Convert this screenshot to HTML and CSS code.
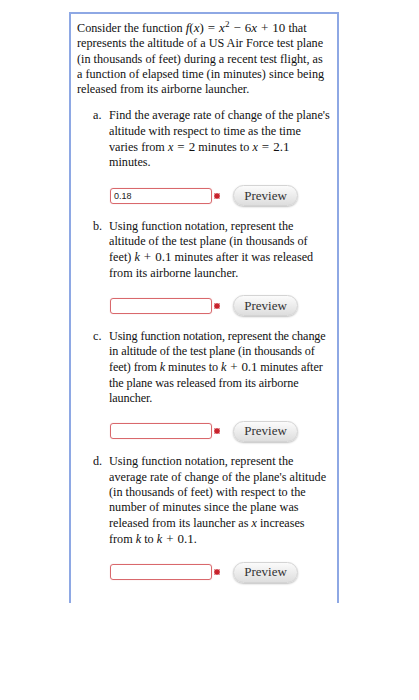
FILE: index.html
```html
<!DOCTYPE html>
<html>
<head>
<meta charset="utf-8">
<link rel="stylesheet" href="styles.css">
</head>
<body>
<div class="card">
  <p class="intro">Consider the function <span class="m"><i>f</i>(<i>x</i>)</span><span class="op">=</span><span class="m"><i>x</i><sup>2</sup></span><span class="op">&minus;</span><span class="m">6<i>x</i></span><span class="op">+</span><span class="m">10</span> that represents the altitude of a US Air Force test plane (in thousands of feet) during a recent test flight, as a function of elapsed time (in minutes) since being released from its airborne launcher.</p>
  <div class="items">
    <div class="item">
      <div class="row">
        <span class="label">a.</span>
        <p class="text">Find the average rate of change of the plane's altitude with respect to time as the time varies from <i>x</i><span class="op">=</span><span class="m">2</span> minutes to <i>x</i><span class="op">=</span><span class="m">2.1</span> minutes.</p>
      </div>
      <div class="answer">
        <div class="field">0.18</div>
        <svg class="mark" width="6" height="6" viewBox="0 0 6 6"><path d="M0.5 0.5 L5.5 5.5 M5.5 0.5 L0.5 5.5 M3 0 L3 6 M0 3 L6 3" stroke="#c8202a" stroke-width="1.4"/></svg>
        <button class="preview">Preview</button>
      </div>
    </div>
    <div class="item">
      <div class="row">
        <span class="label">b.</span>
        <p class="text">Using function notation, represent the altitude of the test plane (in thousands of feet) <i>k</i><span class="op">+</span><span class="m">0.1</span> minutes after it was released from its airborne launcher.</p>
      </div>
      <div class="answer">
        <div class="field"></div>
        <svg class="mark" width="6" height="6" viewBox="0 0 6 6"><path d="M0.5 0.5 L5.5 5.5 M5.5 0.5 L0.5 5.5 M3 0 L3 6 M0 3 L6 3" stroke="#c8202a" stroke-width="1.4"/></svg>
        <button class="preview">Preview</button>
      </div>
    </div>
    <div class="item">
      <div class="row">
        <span class="label">c.</span>
        <p class="text text-tight">Using function notation, represent the change in altitude of the test plane (in thousands of feet) from <i>k</i> minutes to <i>k</i><span class="op">+</span><span class="m">0.1</span> minutes after the plane was released from its airborne launcher.</p>
      </div>
      <div class="answer">
        <div class="field"></div>
        <svg class="mark" width="6" height="6" viewBox="0 0 6 6"><path d="M0.5 0.5 L5.5 5.5 M5.5 0.5 L0.5 5.5 M3 0 L3 6 M0 3 L6 3" stroke="#c8202a" stroke-width="1.4"/></svg>
        <button class="preview">Preview</button>
      </div>
    </div>
    <div class="item">
      <div class="row">
        <span class="label">d.</span>
        <p class="text">Using function notation, represent the average rate of change of the plane's altitude (in thousands of feet) with respect to the number of minutes since the plane was released from its launcher as <i>x</i> increases from <i>k</i> to <i>k</i><span class="op">+</span><span class="m">0.1</span>.</p>
      </div>
      <div class="answer">
        <div class="field"></div>
        <svg class="mark" width="6" height="6" viewBox="0 0 6 6"><path d="M0.5 0.5 L5.5 5.5 M5.5 0.5 L0.5 5.5 M3 0 L3 6 M0 3 L6 3" stroke="#c8202a" stroke-width="1.4"/></svg>
        <button class="preview">Preview</button>
      </div>
    </div>
  </div>
</div>
</body>
</html>
```
FILE: styles.css
```css
html, body {
  margin: 0;
  padding: 0;
  background: #ffffff;
}
body {
  font-family: "Liberation Serif", "Times New Roman", serif;
  font-size: 12.2px;
  line-height: 15.3px;
  color: #111;
}
.card {
  box-sizing: border-box;
  margin: 12px 0 0 69px;
  width: 270px;
  height: 591px;
  border: 2px solid #8ea8e4;
  border-bottom: none;
  padding: 6px 7px 21px 6px;
}
p {
  margin: 0;
}
.m {
  font-family: "Liberation Serif", serif;
  font-size: 13px;
}
.op {
  display: inline-block;
  margin: 0 4px;
  font-size: 13px;
  color: #222;
}
sup {
  font-size: 9px;
  line-height: 0;
  vertical-align: 5px;
}
.items {
  margin-top: 11px;
  padding-left: 16px;
}
.item {
  margin-bottom: 12px;
}
.row {
  display: flex;
}
.label {
  width: 16px;
  flex: none;
}
.text {
  flex: 1;
}
.text-tight {
  letter-spacing: -0.12px;
}
.answer {
  display: flex;
  align-items: center;
  margin-top: 14px;
  padding-left: 17px;
  height: 22px;
}
.field {
  width: 97px;
  height: 14px;
  border: 1px solid #d9686c;
  border-radius: 3px;
  box-shadow: 0 0 1px rgba(217, 104, 108, 0.5);
  font-family: "Liberation Sans", Arial, sans-serif;
  font-size: 9px;
  line-height: 14px;
  padding-left: 3px;
  color: #222;
}
.mark {
  margin-left: 2px;
  margin-right: 13px;
}
.preview {
  width: 65px;
  height: 21px;
  border: 1px solid #d4d4d4;
  border-radius: 11px;
  background: linear-gradient(#fbfbfb, #dedede);
  box-shadow: 0 1px 2px rgba(0, 0, 0, 0.25);
  font-family: "Liberation Serif", serif;
  font-size: 13px;
  color: #333;
  padding: 0;
}
```
